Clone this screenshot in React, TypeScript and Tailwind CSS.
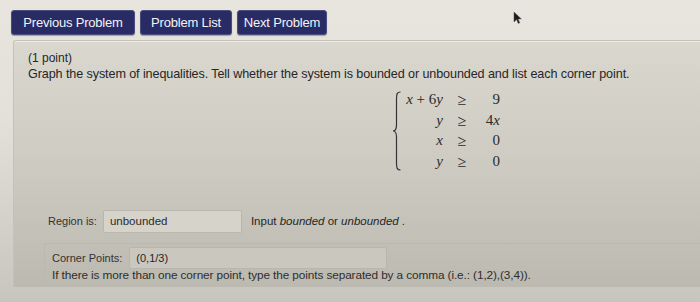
import React from 'react';

const sans = { fontFamily: '"Liberation Sans", Arial, sans-serif' };

const rows: [string, string][] = [
  ['x + 6y', '9'],
  ['y', '4x'],
  ['x', '0'],
  ['y', '0'],
];

function NavButton({ label, width }: { label: string; width: string }) {
  return (
    <button
      className={`h-[25px] ${width} rounded-[3px] border border-[#4a4d7e] bg-[#292c64] text-[13px] font-normal tracking-[-0.2px] text-[#f3f3f6] shadow-[0_1px_1px_rgba(0,0,0,0.3)]`}
    >
      {label}
    </button>
  );
}

export default function App() {
  return (
    <div
      className="relative h-[302px] w-[700px] overflow-hidden bg-[linear-gradient(180deg,#e8e5de_0%,#e3e0d9_40%,#c7c5bd_100%)] text-[#262626]"
      style={sans}
    >
      {/* mouse pointer caught in the photo */}
      <svg width="9" height="13" viewBox="0 0 9 13" className="absolute left-[513px] top-[11px]">
        <path d="M1 1 L1 11 L3.5 8.6 L5.3 12.4 L6.8 11.7 L5 8 L8.3 8 Z" fill="#1d1d1d" stroke="#555" strokeWidth="0.5" />
      </svg>

      <div className="flex gap-[5px] pl-[11px] pt-[10px]">
        <NavButton label="Previous Problem" width="w-[124px]" />
        <NavButton label="Problem List" width="w-[92px]" />
        <NavButton label="Next Problem" width="w-[90px]" />
      </div>

      <div className="ml-[13px] mt-[5px] h-[247px] rounded-tl-[3px] border-l border-t border-[#c4c1b9] bg-[linear-gradient(180deg,#dad7cf_0%,#cfccc4_45%,#bbb9b0_100%)] pl-[14px] pt-[10px] shadow-[inset_0_1px_0_#f0ede6]">
        <p className="text-[12px] leading-[15px]">(1 point)</p>
        <p className="whitespace-nowrap text-[12.6px] leading-[16px] tracking-[-0.1px]">
          Graph the system of inequalities. Tell whether the system is bounded or unbounded and list each corner point.
        </p>

        <div
          className="ml-[364px] mt-[9px] flex items-stretch text-[15px] text-[#2a2a2a]"
          style={{ fontFamily: '"Liberation Serif", "Times New Roman", serif' }}
        >
          <svg width="9" height="80" viewBox="0 0 9 80" className="mr-[1px]">
            <path
              d="M8.5 1 C5 1 4.5 3 4.5 8 L4.5 34 C4.5 38 3.5 40 1 40 C3.5 40 4.5 42 4.5 46 L4.5 72 C4.5 77 5 79 8.5 79"
              fill="none"
              stroke="#333"
              strokeWidth="1.2"
            />
          </svg>
          <div className="grid grid-cols-[41px_38px_19px] gap-y-[2px]">
            {rows.map(([l, r], i) => (
              <React.Fragment key={i}>
                <span className="whitespace-nowrap text-right italic leading-[17.5px]">
                  {l === 'x + 6y' ? (
                    <>
                      x <span className="not-italic">+ 6</span>y
                    </>
                  ) : (
                    l
                  )}
                </span>
                <span className="text-center text-[16px] leading-[17.5px]">≥</span>
                <span className="text-right leading-[17.5px]">
                  {r === '4x' ? (
                    <>
                      4<i>x</i>
                    </>
                  ) : (
                    r
                  )}
                </span>
              </React.Fragment>
            ))}
          </div>
        </div>

        <div className="ml-[20px] mt-[39px] flex items-center text-[11px]">
          <span className="mr-[6px] text-[#333]">Region is:</span>
          <div className="flex h-[23px] w-[139px] items-center rounded-[2px] border border-[#b9b6ad] bg-[#d6d3cb] pl-[6px] text-[11.5px] text-[#2b2b2b]">
            unbounded
          </div>
          <span className="ml-[9px] text-[11.5px]">
            Input <i>bounded</i> or <i>unbounded</i> .
          </span>
        </div>

        <div className="ml-[16px] mt-[10px] h-[41px] border-l border-t border-[#bab8af] pl-[7px] pt-[3px]">
          <div className="flex items-center text-[11px]">
            <span className="mr-[7px] text-[#333]">Corner Points:</span>
            <div className="flex h-[22px] w-[258px] items-center rounded-[2px] border border-[#b9b6ad] bg-[#cac7bf] pl-[6px] text-[11px]">
              (0,1/3)
            </div>
          </div>
          <p className="whitespace-nowrap text-[11.8px] leading-[12px] tracking-[-0.1px] text-[#2e2e2e]">
            If there is more than one corner point, type the points separated by a comma (i.e.: (1,2),(3,4)).
          </p>
        </div>
      </div>
    </div>
  );
}
